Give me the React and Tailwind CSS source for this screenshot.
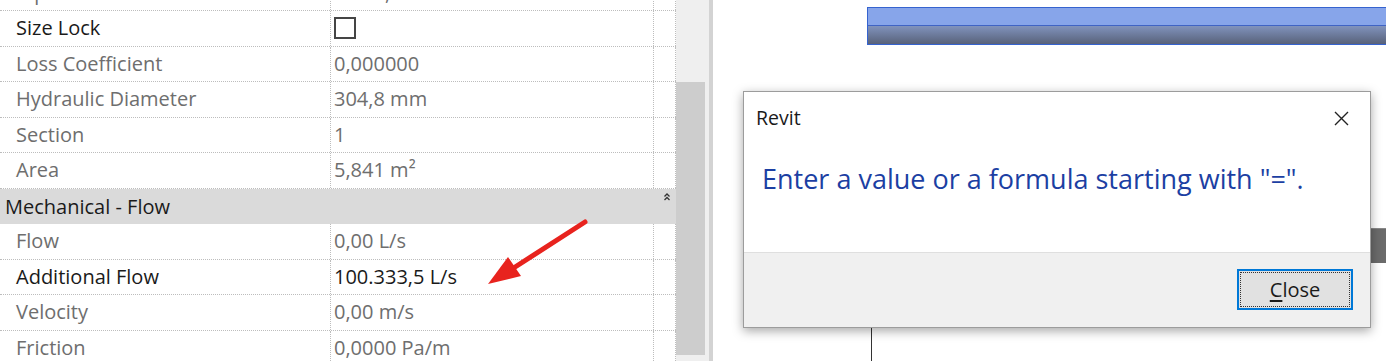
import React from 'react';

const rows = [
  { label: 'Equivalent Diameter', value: '2.727,1 mm', muted: true },
  { label: 'Size Lock', checkbox: true },
  { label: 'Loss Coefficient', value: '0,000000', muted: true },
  { label: 'Hydraulic Diameter', value: '304,8 mm', muted: true },
  { label: 'Section', value: '1', muted: true },
  { label: 'Area', value: '5,841 m²', muted: true },
];

const flowRows = [
  { label: 'Flow', value: '0,00 L/s', muted: true },
  { label: 'Additional Flow', value: '100.333,5 L/s' },
  { label: 'Velocity', value: '0,00 m/s', muted: true },
  { label: 'Friction', value: '0,0000 Pa/m', muted: true },
];

function PropRow({ row, className = '' }) {
  const color = row.muted ? 'text-[#6e6e6e]' : 'text-[#1a1a1a]';
  return (
    <div className={`flex h-[35.5px] shrink-0 border-b border-dotted border-[#bdbdbd] ${className}`}>
      <div className={`w-[331px] shrink-0 border-r border-dotted border-[#bdbdbd] pl-[16px] flex items-center ${color}`}>
        {row.label}
      </div>
      <div className={`w-[323px] shrink-0 border-r border-dotted border-[#bdbdbd] pl-[3px] flex items-center ${color}`}>
        {row.checkbox ? (
          <div className="w-[22px] h-[22px] border-2 border-[#454545] bg-white" />
        ) : (
          row.value
        )}
      </div>
      <div className="flex-1 border-r border-dotted border-[#bdbdbd]" />
    </div>
  );
}

export default function App() {
  return (
    <div
      className="w-[1386px] h-[361px] flex overflow-hidden bg-white text-[20px]"
      style={{ fontFamily: '"Open Sans", "Noto Sans", sans-serif' }}
    >
      {/* Properties grid */}
      <div className="w-[676px] shrink-0 relative flex flex-col">
        <PropRow row={rows[0]} className="-mt-[24.5px]" />
        {rows.slice(1).map((r) => (
          <PropRow key={r.label} row={r} />
        ))}

        {/* Group header */}
        <div className="h-[35.5px] shrink-0 bg-[#dadada] flex items-center justify-between pl-[5px] pr-[6px] pt-[2px] text-[#1a1a1a]">
          <span>Mechanical - Flow</span>
          <svg width="6" height="8" viewBox="0 0 6 8" className="self-start mt-[2px]">
            <path d="M0.5 3.5 L3 1 L5.5 3.5 M0.5 7 L3 4.5 L5.5 7" fill="none" stroke="#333" strokeWidth="1.3" />
          </svg>
        </div>

        {flowRows.map((r) => (
          <PropRow key={r.label} row={r} />
        ))}

        {/* Red annotation arrow */}
        <svg className="absolute left-0 top-0 pointer-events-none" width="676" height="361">
          <line x1="585" y1="222" x2="512" y2="269" stroke="#e8231e" strokeWidth="5" strokeLinecap="round" />
          <polygon points="488,284 521,276 508,257" fill="#e8231e" />
        </svg>
      </div>

      {/* Scrollbar */}
      <div className="w-[33px] shrink-0 bg-[#efefef] flex flex-col">
        <div className="mt-[82px] h-[273px] w-[29px] bg-[#cdcdcd]" />
      </div>
      <div className="w-[4px] shrink-0 bg-[#d3d3d3]" />

      {/* Drawing canvas */}
      <div className="flex-1 relative bg-white">
        {/* Duct */}
        <div className="absolute left-[154px] top-[7px] right-[-10px] h-[38px] border border-[#3563cf] flex flex-col">
          <div className="h-[18px] bg-[#87a5ea] border-b border-[#4064c4]" />
          <div className="flex-1 bg-gradient-to-b from-[#8193bd] to-[#58627a]" />
        </div>
        <div className="absolute left-[657px] top-[228px] w-[20px] h-[35px] bg-[#6b6b6b] border-t border-[#888]" />
        <div className="absolute left-[158px] top-[328px] w-px h-[40px] bg-[#333]" />

        {/* Dialog */}
        <div className="absolute left-[30px] top-[91px] w-[628px] h-[237px] bg-white border border-[#9c9c9c] shadow-[0_3px_10px_rgba(0,0,0,0.35)] flex flex-col">
          <div className="h-[52px] shrink-0 flex items-center justify-between pl-[12px] pr-[21px] text-[#1a1a1a]">
            <span className="text-[19.5px]">Revit</span>
            <svg width="15" height="15" viewBox="0 0 15 15">
              <path d="M1 1 L14 14 M14 1 L1 14" stroke="#222" strokeWidth="1.4" />
            </svg>
          </div>
          <div className="h-[108px] shrink-0 pl-[18px] pt-[18px]">
            <p className="text-[27px] leading-[34px] text-[#1c3fa3]">Enter a value or a formula starting with "=".</p>
          </div>
          <div className="flex-1 bg-[#f0f0f0] border-t border-[#dfdfdf] flex justify-end items-start pt-[16px] pr-[17px]">
            <button className="relative w-[116px] h-[41px] bg-[#e1e1e1] border-2 border-[#0078d7] text-[20px] text-[#1a1a1a]">
              <span className="absolute inset-[1px] border border-dotted border-[#333]" />
              <span className="relative">
                <span className="underline underline-offset-[3px]">C</span>lose
              </span>
            </button>
          </div>
        </div>
      </div>
    </div>
  );
}
